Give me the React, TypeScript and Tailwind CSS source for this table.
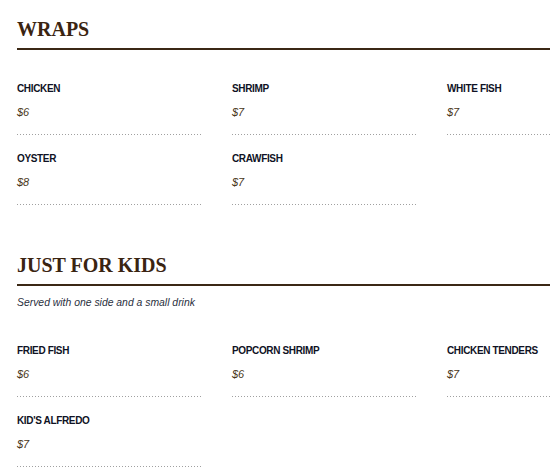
import React from "react";

type Item = { name: string; price: string };

const wraps: Item[] = [
  { name: "CHICKEN", price: "$6" },
  { name: "SHRIMP", price: "$7" },
  { name: "WHITE FISH", price: "$7" },
  { name: "OYSTER", price: "$8" },
  { name: "CRAWFISH", price: "$7" },
];

const kids: Item[] = [
  { name: "FRIED FISH", price: "$6" },
  { name: "POPCORN SHRIMP", price: "$6" },
  { name: "CHICKEN TENDERS", price: "$7" },
  { name: "KID'S ALFREDO", price: "$7" },
];

function MenuItem({ item }: { item: Item }) {
  return (
    <div className="flex flex-col">
      <div className="text-[10px] leading-[12px] font-bold tracking-[-0.35px] text-[#0f1224] font-['Liberation_Sans',Arial,sans-serif]">
        {item.name}
      </div>
      <div className="mt-[11px] text-[11px] leading-[12px] italic text-[#4a3822] font-['Liberation_Sans',Arial,sans-serif]">
        {item.price}
      </div>
      <div className="mt-[16px] h-px bg-[linear-gradient(to_right,#a0a0a0_1px,transparent_1px)] bg-[length:3px_1px]" />
    </div>
  );
}

function Section({
  title,
  note,
  items,
}: {
  title: string;
  note?: string;
  items: Item[];
}) {
  return (
    <section className="flex flex-col">
      <h2 className="text-[20px] leading-[20px] font-bold text-[#3a2411] font-['Liberation_Serif','Times_New_Roman',serif]">
        {title}
      </h2>
      <div className="mt-[9px] h-[2px] bg-[#3b2815]" />
      {note ? (
        <>
          <p className="mt-[11px] text-[10.4px] leading-[12px] italic text-[#2a2f3d] font-['Liberation_Sans',Arial,sans-serif]">
            {note}
          </p>
          <div className="mt-[36px] grid grid-cols-[185px_185px_185px] gap-x-[30px] gap-y-[18px]">
            {items.map((it) => (
              <MenuItem key={it.name} item={it} />
            ))}
          </div>
        </>
      ) : (
        <div className="mt-[33px] grid grid-cols-[185px_185px_185px] gap-x-[30px] gap-y-[18px]">
          {items.map((it) => (
            <MenuItem key={it.name} item={it} />
          ))}
        </div>
      )}
    </section>
  );
}

export default function App() {
  return (
    <div className="w-[550px] h-[468px] overflow-hidden bg-white">
      <div className="w-[700px] pl-[17px] pt-[19px] flex flex-col gap-[50px]">
        <Section title="WRAPS" items={wraps} />
        <Section
          title="JUST FOR KIDS"
          note="Served with one side and a small drink"
          items={kids}
        />
      </div>
    </div>
  );
}
